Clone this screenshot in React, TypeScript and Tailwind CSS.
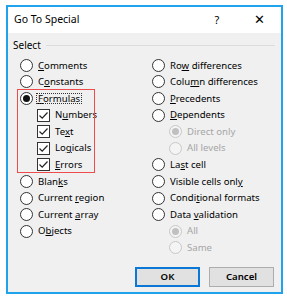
import React from "react";

type Item = {
  pre: string;
  u: string;
  post: string;
  kind?: "radio" | "check";
  checked?: boolean;
  disabled?: boolean;
  indent?: boolean;
  focus?: boolean;
};

function Radio({ checked, disabled }: { checked?: boolean; disabled?: boolean }) {
  return (
    <span
      className={`w-[13px] h-[13px] rounded-full border flex items-center justify-center shrink-0 ${
        disabled ? "border-[#c8c8c8] bg-[#f4f4f4]" : "border-[#333] bg-white"
      }`}
    >
      {checked && (
        <span className={`w-[7px] h-[7px] rounded-full ${disabled ? "bg-[#c0c0c0]" : "bg-[#111]"}`} />
      )}
    </span>
  );
}

function Check() {
  return (
    <span className="w-[13px] h-[13px] border border-[#333] bg-white flex items-center justify-center shrink-0">
      <svg width="11" height="11" viewBox="0 0 11 11">
        <path d="M1.5 5.5 L4.2 8.2 L9.5 2.5" fill="none" stroke="#222" strokeWidth="1.2" />
      </svg>
    </span>
  );
}

function Row({ it }: { it: Item }) {
  return (
    <div className={`h-[16.6px] flex items-center gap-[4px] ${it.indent ? "pl-[17px]" : ""}`}>
      {it.kind === "check" ? <Check /> : <Radio checked={it.checked} disabled={it.disabled} />}
      <span
        className={`leading-none px-[1px] ${it.disabled ? "text-[#a6a6a6]" : "text-black"} ${
          it.focus ? "outline outline-1 outline-dotted outline-[#333]" : ""
        }`}
      >
        {it.pre}
        {it.u && <span className="underline underline-offset-[1px]">{it.u}</span>}
        {it.post}
      </span>
    </div>
  );
}

const left: Item[] = [
  { pre: "", u: "C", post: "omments" },
  { pre: "C", u: "o", post: "nstants" },
  { pre: "", u: "F", post: "ormulas", checked: true, focus: true },
  { pre: "N", u: "u", post: "mbers", kind: "check", indent: true },
  { pre: "Te", u: "x", post: "t", kind: "check", indent: true },
  { pre: "Lo", u: "g", post: "icals", kind: "check", indent: true },
  { pre: "", u: "E", post: "rrors", kind: "check", indent: true },
  { pre: "Blan", u: "k", post: "s" },
  { pre: "Current ", u: "r", post: "egion" },
  { pre: "Current ", u: "a", post: "rray" },
  { pre: "O", u: "b", post: "jects" },
];

const right: Item[] = [
  { pre: "Ro", u: "w", post: " differences" },
  { pre: "Colu", u: "m", post: "n differences" },
  { pre: "", u: "P", post: "recedents" },
  { pre: "", u: "D", post: "ependents" },
  { pre: "Direct only", u: "", post: "", indent: true, disabled: true, checked: true },
  { pre: "All levels", u: "", post: "", indent: true, disabled: true },
  { pre: "La", u: "s", post: "t cell" },
  { pre: "Visible cells onl", u: "y", post: "" },
  { pre: "Condi", u: "t", post: "ional formats" },
  { pre: "Data ", u: "v", post: "alidation" },
  { pre: "All", u: "", post: "", indent: true, disabled: true, checked: true },
  { pre: "Same", u: "", post: "", indent: true, disabled: true },
];

export default function App() {
  return (
    <div className="w-[287px] h-[300px] bg-white pt-[5px] pl-[6px] font-['Noto_Sans',sans-serif]">
      <div className="w-[277px] h-[289px] border-2 border-[#1fa3ec] flex flex-col overflow-hidden">
        <div className="h-[26px] shrink-0 bg-white flex items-center pl-[6px] text-[10.5px] text-black">
          <span className="flex-1">Go To Special</span>
          <span className="w-[20px] text-center mr-[22px] text-[11px]">?</span>
          <span className="w-[20px] text-center mr-[12px] text-[13px] font-light">✕</span>
        </div>
        <div className="flex-1 bg-[#f0f0f0] text-[9.6px] flex flex-col">
          <div className="flex items-center pl-[5px] pr-[6px] pt-[5px] text-[10px]">
            <span>Select</span>
            <span className="flex-1 h-px bg-[#dcdcdc] ml-[5px]" />
          </div>
          <div className="flex pt-[4px]">
            <div className="w-[144px] shrink-0 pl-[12px] relative">
              {left.map((it, i) => (
                <Row key={i} it={it} />
              ))}
              <div className="absolute left-[9px] top-[31.5px] w-[78px] h-[84.5px] border border-[#ee4b4b]" />
            </div>
            <div className="flex-1">
              {right.map((it, i) => (
                <Row key={i} it={it} />
              ))}
            </div>
          </div>
          <div className="flex justify-end gap-[9px] pr-[7px] mt-[11px]">
            <button className="w-[65px] h-[20px] border-2 border-[#0a78d4] bg-[#e1e1e1] text-[9.6px] font-semibold">
              OK
            </button>
            <button className="w-[65px] h-[20px] border border-[#adadad] bg-[#e1e1e1] text-[9.6px] font-semibold">
              Cancel
            </button>
          </div>
        </div>
      </div>
    </div>
  );
}
